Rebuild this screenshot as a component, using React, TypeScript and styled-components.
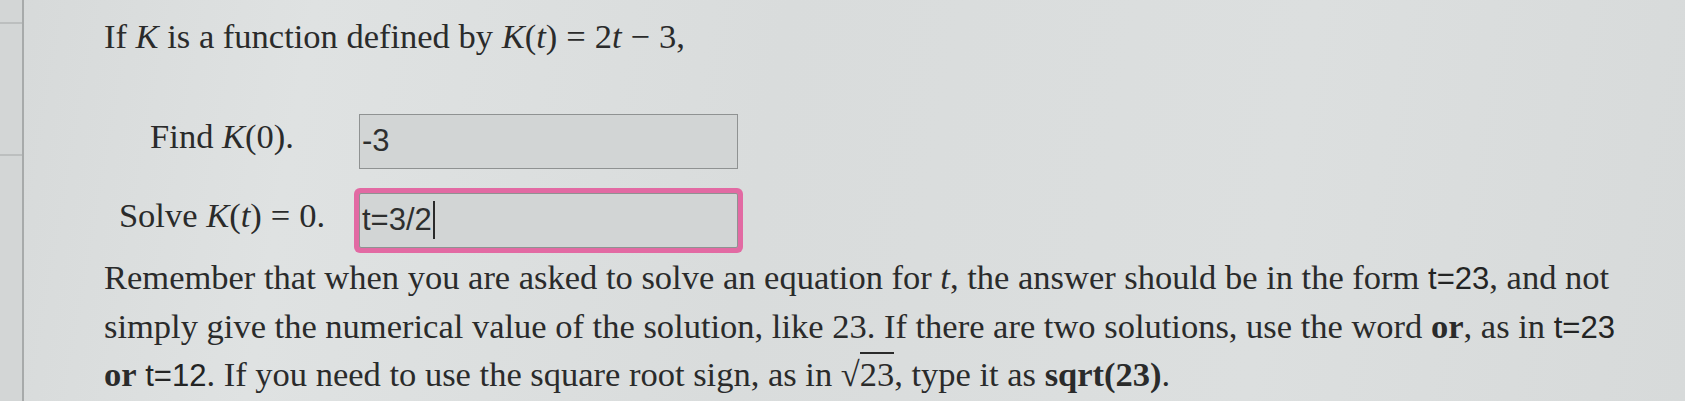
import React from "react";
import styled, { createGlobalStyle } from "styled-components";

const GlobalStyle = createGlobalStyle`
  html, body {
    margin: 0;
    padding: 0;
    background: #dadddd;
  }
  body {
    font-family: "Liberation Serif", "Times New Roman", serif;
    color: #2a2b2b;
  }
`;

const Page = styled.div`
  display: flex;
  width: 1685px;
  height: 401px;
  overflow: hidden;
  background: linear-gradient(100deg, #d6d9d9 0%, #dfe2e2 18%, #d9dcdc 45%, #dcdfdf 75%, #d7dada 100%);
`;

const SideStrip = styled.div`
  width: 22px;
  flex: none;
  display: flex;
  flex-direction: column;
  border-right: 2px solid #a7aaaa;
  background: #d3d6d6;
`;

const StripSegment = styled.div<{ $h: number }>`
  height: ${(p) => p.$h}px;
  flex: none;
  border-bottom: 2px solid #bcbfbf;
`;

const Main = styled.div`
  flex: 1;
  display: flex;
  flex-direction: column;
  padding: 16px 0 0 80px;
  font-size: 34.5px;
`;

const Title = styled.div`
  line-height: 40px;
  white-space: nowrap;
`;

const Var = styled.span`
  font-style: italic;
`;

const Op = styled.span`
  margin: 0 0.26em;
`;

const QTable = styled.div`
  margin-top: 50px;
  display: grid;
  grid-template-columns: 236px auto;
  grid-auto-rows: 70px;
  row-gap: 9px;
`;

const Label = styled.div`
  display: flex;
  align-items: center;
  justify-content: center;
  line-height: 40px;
  padding-bottom: 11px;
  white-space: nowrap;
`;

const AnswerCell = styled.div`
  display: flex;
  align-items: center;
  padding-left: 19px;
`;

const AnswerBox = styled.div<{ $focused?: boolean }>`
  box-sizing: border-box;
  width: 379px;
  height: 55px;
  display: flex;
  align-items: center;
  padding-left: 2px;
  border: 1px solid #8f9292;
  background: #d2d5d5;
  font-family: "Liberation Sans", Arial, sans-serif;
  font-size: 31px;
  color: #2e2f2f;
  border-radius: ${(p) => (p.$focused ? "2px" : "0")};
  box-shadow: ${(p) => (p.$focused ? "0 0 0 5px #e26aa3" : "none")};
`;

const Caret = styled.span`
  display: inline-block;
  width: 2px;
  height: 38px;
  margin-left: 1px;
  background: #2a2a2a;
`;

const Paragraph = styled.p`
  margin: -1px 0 0;
  line-height: 46.5px;
  white-space: nowrap;
`;

const Code = styled.span`
  font-family: "Liberation Sans", Arial, sans-serif;
  font-size: 0.9em;
  color: #232424;
`;

const Strong = styled.span`
  font-weight: bold;
`;

const Radical = styled.span`
  white-space: nowrap;
`;

const RadicalBody = styled.span`
  border-top: 2px solid #2a2b2b;
  padding-top: 1px;
`;

export default function App() {
  return (
    <>
      <GlobalStyle />
      <Page>
        <SideStrip>
          <StripSegment $h={22} />
          <StripSegment $h={130} />
        </SideStrip>
        <Main>
          <Title>
            If <Var>K</Var> is a function defined by <Var>K</Var>(<Var>t</Var>)
            <Op>=</Op>2<Var>t</Var>
            <Op>−</Op>3,
          </Title>
          <QTable>
            <Label>
              Find&nbsp;<Var>K</Var>(0).
            </Label>
            <AnswerCell>
              <AnswerBox>-3</AnswerBox>
            </AnswerCell>
            <Label>
              Solve&nbsp;<Var>K</Var>(<Var>t</Var>)<Op>=</Op>0.
            </Label>
            <AnswerCell>
              <AnswerBox $focused>
                t=3/2
                <Caret />
              </AnswerBox>
            </AnswerCell>
          </QTable>
          <Paragraph>
            Remember that when you are asked to solve an equation for <Var>t</Var>, the answer should be in
            the form <Code>t=23</Code>, and not
            <br />
            simply give the numerical value of the solution, like 23. If there are two solutions, use the
            word <Strong>or</Strong>, as in <Code>t=23</Code>
            <br />
            <Strong>or</Strong> <Code>t=12</Code>. If you need to use the square root sign, as in{" "}
            <Radical>
              √<RadicalBody>23</RadicalBody>
            </Radical>
            , type it as <Strong>sqrt(23)</Strong>.
          </Paragraph>
        </Main>
      </Page>
    </>
  );
}
